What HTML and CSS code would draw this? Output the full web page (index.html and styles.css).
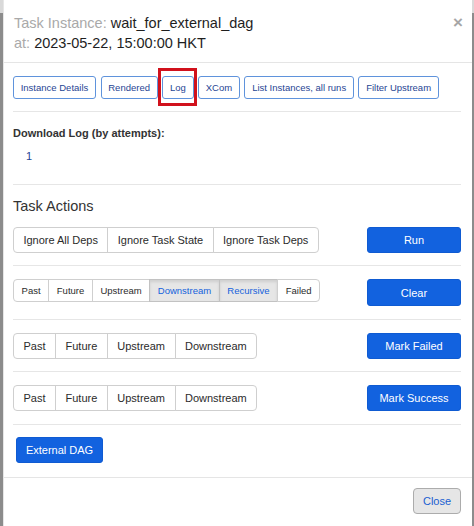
FILE: index.html
```html
<!DOCTYPE html>
<html>
<head>
<meta charset="utf-8">
<link rel="stylesheet" href="styles.css">
</head>
<body>
<div class="modal">
  <div class="header">
    <div class="title">
      <div class="line"><span class="muted">Task Instance:</span> wait_for_external_dag</div>
      <div class="line"><span class="muted">at:</span> 2023-05-22, 15:00:00 HKT</div>
    </div>
    <span class="close-x">×</span>
  </div>
  <div class="body">
    <div class="nav-row">
      <button class="nav-btn">Instance Details</button>
      <button class="nav-btn">Rendered</button>
      <button class="nav-btn highlighted">Log</button>
      <button class="nav-btn">XCom</button>
      <button class="nav-btn">List Instances, all runs</button>
      <button class="nav-btn">Filter Upstream</button>
    </div>
    <div class="download">
      <div class="download-title">Download Log (by attempts):</div>
      <div class="attempt">1</div>
    </div>
    <div class="section-title">Task Actions</div>
    <div class="action-row">
      <div class="group">
        <button class="g-btn">Ignore All Deps</button>
        <button class="g-btn">Ignore Task State</button>
        <button class="g-btn">Ignore Task Deps</button>
      </div>
      <button class="primary">Run</button>
    </div>
    <div class="action-row">
      <div class="group small">
        <button class="g-btn">Past</button>
        <button class="g-btn">Future</button>
        <button class="g-btn">Upstream</button>
        <button class="g-btn active">Downstream</button>
        <button class="g-btn active">Recursive</button>
        <button class="g-btn">Failed</button>
      </div>
      <button class="primary tall">Clear</button>
    </div>
    <div class="action-row">
      <div class="group wide">
        <button class="g-btn">Past</button>
        <button class="g-btn">Future</button>
        <button class="g-btn">Upstream</button>
        <button class="g-btn">Downstream</button>
      </div>
      <button class="primary">Mark Failed</button>
    </div>
    <div class="action-row">
      <div class="group wide">
        <button class="g-btn">Past</button>
        <button class="g-btn">Future</button>
        <button class="g-btn">Upstream</button>
        <button class="g-btn">Downstream</button>
      </div>
      <button class="primary">Mark Success</button>
    </div>
    <div class="extra">
      <button class="primary ext">External DAG</button>
    </div>
  </div>
  <div class="footer">
    <button class="close-btn">Close</button>
  </div>
</div>
</body>
</html>
```

FILE: styles.css
```css
* { box-sizing: border-box; }
html, body {
  margin: 0;
  padding: 0;
  height: 526px;
  overflow: hidden;
}
body {
  background: linear-gradient(to bottom, #d9d9d9 0, #d9d9d9 13px, #8c8c8c 13px, #8c8c8c 100%);
  font-family: "Liberation Sans", Arial, sans-serif;
  color: #333;
}
button {
  font-family: "Liberation Sans", Arial, sans-serif;
  margin: 0;
  cursor: pointer;
}
.modal {
  margin-left: 3px;
  width: 469px;
  height: 526px;
  background: #fff;
  border-left: 1px solid #e6e6e6;
}
.header {
  display: flex;
  justify-content: space-between;
  align-items: flex-start;
  padding: 13px 9px 9px 10px;
  border-bottom: 1px solid #e5e5e5;
}
.title .line {
  font-size: 14.5px;
  line-height: 20px;
  color: #1e1e1e;
}
.muted { color: #a9a9a9; }
.close-x {
  font-size: 17px;
  line-height: 16px;
  font-weight: bold;
  color: #a6a6a6;
  margin-top: 2px;
}
.body {
  padding: 0 11px 0 9px;
}
.nav-row {
  display: flex;
  gap: 4.6px;
  padding: 13px 0 12px;
  border-bottom: 1px solid #e6e6e6;
}
.nav-btn {
  position: relative;
  height: 23px;
  padding: 0 6.7px;
  font-size: 9.5px;
  color: #1f4594;
  background: #fff;
  border: 1px solid #5f93dc;
  border-radius: 3px;
  white-space: nowrap;
}
.nav-btn.highlighted::after {
  content: "";
  position: absolute;
  top: -9px;
  bottom: -8px;
  left: -5px;
  right: -4px;
  border: 3px solid #d1111c;
}
.download {
  padding: 13.5px 0 20px;
  border-bottom: 1px solid #e6e6e6;
}
.download-title {
  font-size: 11px;
  font-weight: bold;
  line-height: 15px;
  color: #333;
}
.attempt {
  font-size: 11px;
  line-height: 15px;
  margin-top: 8px;
  padding-left: 13px;
  color: #1f4594;
}
.section-title {
  font-size: 14.5px;
  line-height: 18px;
  margin-top: 12px;
  margin-bottom: -1px;
  color: #333;
}
.action-row {
  display: flex;
  justify-content: space-between;
  align-items: flex-start;
  padding: 13px 0 12.5px;
  border-bottom: 1px solid #e6e6e6;
}
.group {
  display: flex;
}
.g-btn {
  height: 26px;
  padding: 0 9.4px;
  font-size: 11px;
  color: #2b2b2b;
  background: #fff;
  border: 1px solid #cfcfcf;
  border-radius: 0;
  margin-left: -1px;
  white-space: nowrap;
}
.group .g-btn:first-child {
  margin-left: 0;
  border-radius: 4px 0 0 4px;
}
.group .g-btn:last-child {
  border-radius: 0 4px 4px 0;
}
.group.small .g-btn {
  height: 23px;
  font-size: 9.5px;
  padding: 0 7.6px;
}
.group.wide .g-btn {
  padding: 0 9.5px;
}
.g-btn.active {
  background: #e6e6e6;
  color: #1462dc;
  border-color: #c2c2c2;
  box-shadow: inset 0 2px 3px rgba(0,0,0,0.1);
}
.primary {
  width: 94px;
  height: 26px;
  font-size: 11px;
  color: #fff;
  background: #1262df;
  border: 1px solid #0f5bd2;
  border-radius: 3px;
}
.primary.tall { height: 27px; }
.extra {
  padding: 12px 0 14px 3px;
}
.primary.ext {
  width: 87px;
}
.footer {
  display: flex;
  justify-content: flex-end;
  padding: 10.5px 11px 0 0;
  border-top: 1px solid #e5e5e5;
}
.close-btn {
  width: 48px;
  height: 26px;
  font-size: 11px;
  color: #1a5fd1;
  background: #e6e6e6;
  border: 1px solid #acacac;
  border-radius: 4px;
}
```
